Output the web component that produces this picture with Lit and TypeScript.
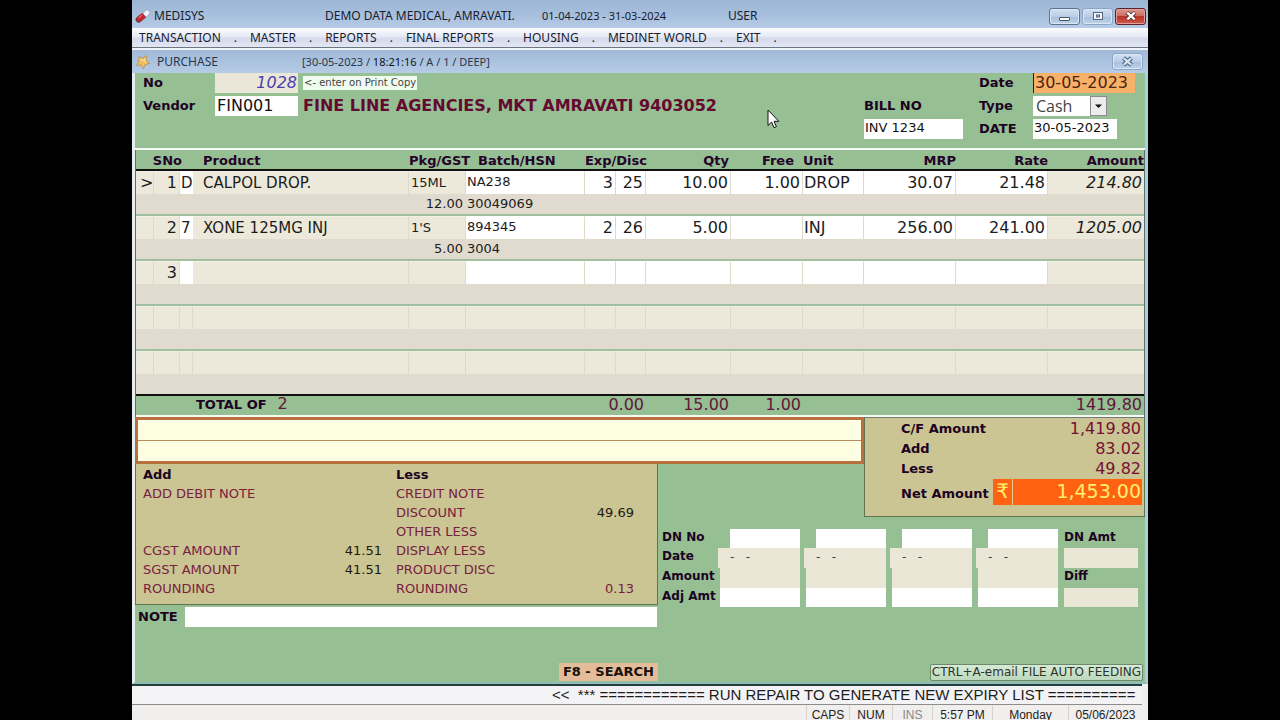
import { LitElement, html, css, nothing } from "lit";
import { customElement, state } from "lit/decorators.js";

interface Line {
  mark?: string;
  sno?: string;
  code?: string;
  product?: string;
  pack?: string;
  gst?: string;
  batch?: string;
  hsn?: string;
  month?: string;
  year?: string;
  qty?: string;
  free?: string;
  unit?: string;
  mrp?: string;
  rate?: string;
  amount?: string;
}

const MENU = ["TRANSACTION", "MASTER", "REPORTS", "FINAL REPORTS", "HOUSING", "MEDINET WORLD", "EXIT"];

const LINES: Line[] = [
  { mark: ">", sno: "1", code: "D", product: "CALPOL DROP.", pack: "15ML", gst: "12.00", batch: "NA238", hsn: "30049069", month: "3", year: "25", qty: "10.00", free: "1.00", unit: "DROP", mrp: "30.07", rate: "21.48", amount: "214.80" },
  { sno: "2", code: "7", product: "XONE 125MG INJ", pack: "1'S", gst: "5.00", batch: "894345", hsn: "3004", month: "2", year: "26", qty: "5.00", free: "", unit: "INJ", mrp: "256.00", rate: "241.00", amount: "1205.00" },
  { sno: "3" },
  {},
  {},
];

const ADJUST: [string, string, string, string][] = [
  ["ADD DEBIT NOTE", "", "CREDIT NOTE", ""],
  ["", "", "DISCOUNT", "49.69"],
  ["", "", "OTHER LESS", ""],
  ["CGST AMOUNT", "41.51", "DISPLAY LESS", ""],
  ["SGST AMOUNT", "41.51", "PRODUCT DISC", ""],
  ["ROUNDING", "", "ROUNDING", "0.13"],
];

const base = css`
  * { box-sizing: border-box; }
  button, input, select {
    font: inherit; color: inherit; margin: 0; padding: 0; border: 0; border-radius: 0;
    background: none; min-width: 0; outline: none;
  }
`;

@customElement("title-bars")
class TitleBars extends LitElement {
  static styles = [base, css`
    :host { display: block; font: 12px/16px "Noto Sans", "Open Sans", sans-serif; color: #17202e; }
    .title {
      display: grid; grid-template-columns: 20px 171px 217px 186px 1fr auto; align-items: center;
      height: 28px; padding: 4px 2px 0 2px;
      background: linear-gradient(#9bb5d3, #a9c1de 60%, #b6cbe6);
    }
    .logo { width: 16px; height: 16px; display: block; }
    .controls { display: flex; gap: 2px; }
    .ctl {
      width: 31px; height: 17px; border: 1px solid #5d738f; border-radius: 3px;
      background: linear-gradient(#d3e0f1, #b9cde6 50%, #a5bedb 51%, #bfd3ea);
      display: grid; place-items: center; box-shadow: inset 0 0 0 1px #dbe7f5;
    }
    .soft { border-color: #8ba6c6; }
    .close {
      border-color: #5b2229; box-shadow: inset 0 0 0 1px #e0a19a;
      background: linear-gradient(#dc9a90, #ce6c5f 48%, #b8362a 50%, #cf5a4a);
    }
    .menu {
      display: flex; gap: 13px; align-items: center; height: 19px; padding-left: 7px;
      background: linear-gradient(#fbfcfe, #e6e9f5 45%, #d5daec 55%, #e3e6f3);
    }
    .child {
      display: grid; grid-template-columns: 22px 145px 1fr auto; align-items: center;
      height: 26px; padding: 2px 5px 0 3px; color: #27384e;
      border-top: 1px solid #6d7681; box-shadow: inset 0 2px #eef4fa;
      background: linear-gradient(#9fb8d6, #b5cbe6);
    }
    .stamp { font-size: 11px; }
    .time { color: #0d141f; }
  `];

  render() {
    return html`
      <header class="title">
        <svg class="logo" viewBox="0 0 16 16">
          <path d="M8 6 11.2 2.8a2.6 2.6 0 0 1 3.8 3.7L11 10Z" fill="#eef3f9" stroke="#8094ac" stroke-width=".6" />
          <path d="M8.4 5.2 3 9.3a2.8 2.8 0 0 0 3.6 4.3l5.2-4.4Z" fill="#c1272d" stroke="#7c1c26" stroke-width=".6" />
          <path d="M4.5 10 8.3 7" stroke="#ef8c88" stroke-width="1" />
          <path d="M1.8 12.2q1.8 2.4 4.4 1.6" stroke="#3c4b6d" fill="none" />
        </svg>
        <span>MEDISYS</span>
        <span>DEMO DATA MEDICAL, AMRAVATI.</span>
        <span class="stamp">01-04-2023 - 31-03-2024</span>
        <span>USER</span>
        <div class="controls">
          <button class="ctl" aria-label="Minimize">
            <svg width="13" height="11" viewBox="0 0 13 11"><rect x="1.5" y="6.5" width="10" height="3" rx=".5" fill="#fff" stroke="#4a5566" /></svg>
          </button>
          <button class="ctl soft" aria-label="Restore">
            <svg width="12" height="10" viewBox="0 0 12 10"><rect x="1.5" y="1.5" width="9" height="7" fill="#f2f6fb" stroke="#55657c" /><rect x="4.5" y="4" width="3" height="2" fill="#a5bedb" stroke="#55657c" /></svg>
          </button>
          <button class="ctl close" aria-label="Close">
            <svg width="12" height="10" viewBox="0 0 12 10"><path d="M2 1.5 10 8.5M10 1.5 2 8.5" stroke="#562530" stroke-width="4" /><path d="M2.3 1.6 9.7 8.4M9.7 1.6 2.3 8.4" stroke="#fff" stroke-width="2.4" /></svg>
          </button>
        </div>
      </header>
      <nav class="menu">
        ${MENU.map((m) => html`<button>${m}</button><span>.</span>`)}
      </nav>
      <header class="child">
        <svg class="logo" viewBox="0 0 16 16">
          <path d="M4 2.5 7.5 4.3 11.5 1.5l-.3 4.8 3.3 3.2-4.3.8-1.7 4.4-2.6-3.8-4.4.5 2.3-4Z" fill="#f1bc5b" stroke="#b98a3b" stroke-width=".7" />
          <path d="M5 5.3 8 6.6l2-1.8-.1 3 1.6 1.7" fill="none" stroke="#fde6ae" />
        </svg>
        <span>PURCHASE</span>
        <span class="stamp">[30-05-2023 / <span class="time">18:21:16</span> / A / 1 / DEEP]</span>
        <button class="ctl soft" aria-label="Close purchase">
          <svg width="13" height="11" viewBox="0 0 13 11"><path d="M2.5 2 10.5 9M10.5 2 2.5 9" stroke="#56708f" stroke-width="4.4" /><path d="M2.8 2.2 10.2 8.8M10.2 2.2 2.8 8.8" stroke="#dfe9f5" stroke-width="2" /></svg>
        </button>
      </header>
    `;
  }
}

@customElement("bill-head")
class BillHead extends LitElement {
  static styles = [base, css`
    :host { display: block; font: 13px/20px Verdana, "DejaVu Sans", sans-serif; color: #111; }
    .form {
      display: grid; grid-template-columns: 67px 83px 1fr 99px 60px 102px; column-gap: 5px;
      grid-auto-rows: 20px; row-gap: 3px; padding: 0 10px 9px 8px; border-bottom: 2px solid #f4fbf3;
    }
    label { font-weight: bold; color: #1d0322; }
    .right { padding-left: 11px; }
    .col4 { grid-column: 4; }
    .col5 { grid-column: 5; }
    input { background: #fff; width: 100%; }
    .big { font-size: 16px; padding-left: 2px; }
    .no { background: #ebe7d8; color: #4a3fae; font-style: italic; text-align: right; padding-right: 1px; }
    .hint {
      justify-self: start; align-self: center; background: #effbee; color: #444;
      font-size: 10px; line-height: 14px; padding: 0 1px; white-space: nowrap;
    }
    .vendor { font-size: 16px; font-weight: bold; color: #640a30; white-space: nowrap; }
    .active { background: #f7b168; color: #4c2410; padding-left: 1px; border-left: 1px solid #2a1a10; }
    .bill { padding: 0 0 2px 1px; }
    .pick { display: grid; grid-template-columns: 1fr; width: 74px; background: #fff; }
    .pick select, .pick svg { grid-area: 1 / 1; }
    select { appearance: none; padding-left: 3px; font-size: 16px; color: #444; font-family: "Open Sans", sans-serif; }
    .arrow { justify-self: end; pointer-events: none; }
    .short { width: 84px; }
  `];

  render() {
    return html`
      <form class="form">
        <label for="no">No</label>
        <input id="no" class="big no" value="1028" readonly />
        <span class="hint">&lt;- enter on Print Copy</span>
        <label class="right col5" for="date">Date</label>
        <input id="date" class="big active" value="30-05-2023" />
        <label for="vendor">Vendor</label>
        <input id="vendor" class="big" value="FIN001" />
        <span class="vendor">FINE LINE AGENCIES, MKT AMRAVATI 9403052</span>
        <label for="bill">BILL NO</label>
        <label class="right" for="type">Type</label>
        <div class="pick">
          <select id="type"><option>Cash</option><option>Credit</option></select>
          <svg class="arrow" width="17" height="20" viewBox="0 0 17 20"><rect x=".5" y=".5" width="16" height="19" fill="#ececec" stroke="#8b8b8b" /><path d="M5 8.5h7L8.5 12Z" fill="#111" /></svg>
        </div>
        <input id="bill" class="bill col4" value="INV 1234" />
        <label class="right" for="billdate">DATE</label>
        <input id="billdate" class="bill short" value="30-05-2023" />
      </form>
    `;
  }
}

@customElement("item-table")
class ItemTable extends LitElement {
  @state() private lines = LINES;

  static styles = [base, css`
    :host { display: block; font: 13px/18px Verdana, "DejaVu Sans", sans-serif; color: #1c1c1c; }
    table {
      width: 100%; table-layout: fixed; border-collapse: separate; border-spacing: 0;
      border: solid #5c6f68; border-width: 0 1px;
    }
    .w-mark { width: 18px; } .w-sno { width: 26px; } .w-code { width: 13px; } .w-pack { width: 57px; }
    .w-batch { width: 119px; } .w-exp { width: 31px; } .w-disc { width: 30px; } .w-qty { width: 85px; }
    .w-free { width: 72px; } .w-unit { width: 61px; } .w-money { width: 92px; } .w-amount { width: 96px; }
    th, td { padding: 0; text-align: left; white-space: nowrap; }
    th { height: 21px; padding-top: 2px; line-height: 17px; color: #250329; border-bottom: 2px solid #111; }
    .r { text-align: right; }
    .h-sno { padding-right: 11px; }
    .name { padding-left: 10px; }
    .h-batch { padding-left: 12px; }
    .h-free { padding-right: 9px; }
    .h-qty { padding-right: 2px; }
    .main td { height: 23px; background: #ede9da; border-right: 1px solid #dedaca; font-size: 16px; line-height: 22px; border-top: 1px solid #f3f0e4; }
    .main td:last-child { border-right: 0; padding-right: 2px; font-style: italic; }
    .main .name { font-size: 15px; }
    .main .pack { font-size: 13px; padding-left: 2px; line-height: 20px; }
    .main .sno { padding-right: 2px; }
    .main .mark { padding-left: 4px; }
    .main .edit { background: #fff; border-top-color: #fff; }
    .edit input { display: block; width: 100%; height: 22px; padding: 0 2px 0 1px; }
    .main .edit.small { font-size: 13px; }
    .small input { padding-bottom: 2px; }
    .main .edit.code { font-size: 15px; border-right: 0; }
    .code input { padding-right: 0; }
    .r input { text-align: right; }
    .sub td { height: 22px; background: #e0dbce; border-bottom: 2px solid #a0bf9f; line-height: 20px; }
    .sub .gst { padding-right: 3px; }
    .sub .hsn { padding-left: 1px; }
    tbody tr:last-child td { border-bottom-color: #111; }
    tfoot td { height: 20px; line-height: 16px; font-size: 16px; color: #64143a; border-bottom: 2px solid #f4fbf3; padding: 0 2px 2px 0; }
    tfoot .of { padding-left: 60px; }
    tfoot b { font-size: 13px; color: #1d0322; padding-right: 11px; }
  `];

  private cell(value: string | undefined, open: boolean, label: string, cls: string) {
    return open
      ? html`<td class="edit ${cls}"><input aria-label=${label} .value=${value ?? ""} /></td>`
      : html`<td></td>`;
  }

  render() {
    return html`
      <table>
        <colgroup>
          <col class="w-mark" /><col class="w-sno" /><col class="w-code" /><col /><col class="w-pack" />
          <col class="w-batch" /><col class="w-exp" /><col class="w-disc" /><col class="w-qty" /><col class="w-free" />
          <col class="w-unit" /><col class="w-money" /><col class="w-money" /><col class="w-amount" />
        </colgroup>
        <thead>
          <tr>
            <th class="r h-sno" colspan="3">SNo</th>
            <th class="name">Product</th>
            <th>Pkg/GST</th>
            <th class="h-batch">Batch/HSN</th>
            <th colspan="2">Exp/Disc</th>
            <th class="r h-qty">Qty</th>
            <th class="r h-free">Free</th>
            <th>Unit</th>
            <th class="r">MRP</th>
            <th class="r">Rate</th>
            <th class="r">Amount</th>
          </tr>
        </thead>
        <tbody>
          ${this.lines.map((l) => {
            const open = l.sno !== undefined;
            return html`
              <tr class="main">
                <td class="mark">${l.mark ?? nothing}</td>
                <td class="sno r">${l.sno ?? nothing}</td>
                ${this.cell(l.code, open, "Code", "code")}
                <td class="name">${l.product ?? nothing}</td>
                <td class="pack">${l.pack ?? nothing}</td>
                ${this.cell(l.batch, open, "Batch", "small")}
                ${this.cell(l.month, open, "Expiry month", "r")}
                ${this.cell(l.year, open, "Expiry year", "r")}
                ${this.cell(l.qty, open, "Quantity", "r")}
                ${this.cell(l.free, open, "Free", "r")}
                ${this.cell(l.unit, open, "Unit", "")}
                ${this.cell(l.mrp, open, "MRP", "r")}
                ${this.cell(l.rate, open, "Rate", "r")}
                <td class="r">${l.amount ?? nothing}</td>
              </tr>
              <tr class="sub">
                <td colspan="4"></td>
                <td class="gst r">${l.gst ?? nothing}</td>
                <td class="hsn" colspan="9">${l.hsn ?? nothing}</td>
              </tr>`;
          })}
        </tbody>
        <tfoot>
          <tr>
            <td class="of" colspan="5"><b>TOTAL OF</b>2</td>
            <td></td>
            <td class="r" colspan="2">0.00</td>
            <td class="r">15.00</td>
            <td class="r">1.00</td>
            <td colspan="3"></td>
            <td class="r">1419.80</td>
          </tr>
        </tfoot>
      </table>
    `;
  }
}

@customElement("bill-foot")
class BillFoot extends LitElement {
  static styles = [base, css`
    :host { display: flex; flex-direction: column; flex: 1; font: 13px/20px Verdana, "DejaVu Sans", sans-serif; color: #1a1206; }
    .grid { display: grid; grid-template-columns: 523px 1fr 281px; grid-template-rows: 47px 53px auto auto; }
    .remarks {
      grid-area: 1 / 1 / 2 / 3; border: 3px solid #b9703f; display: grid; grid-template-rows: 1fr 1fr; gap: 1px;
      background: #b98a5c;
    }
    .remarks input { background: #fefee2; width: 100%; }
    .panel { background: #cbc493; border: 1px solid #5f7552; }
    .sum {
      grid-area: 1 / 3 / 3 / 4; display: grid; grid-template-columns: 92px 20px 1fr; grid-template-rows: 20px 20px 20px 26px;
      padding: 1px 2px 0 36px; align-content: start; border-top-color: #777;
    }
    .sum b, .label { color: #1d0322; font-weight: bold; }
    .sum output { grid-column: 2 / 4; text-align: right; font-size: 16px; color: #741133; padding-right: 1px; }
    .sum .netlabel { padding-top: 5px; }
    .sum .rupee, .sum .net { background: #ff6212; color: #fff169; font-size: 19px; line-height: 24px; }
    .sum .rupee { border-right: 1px solid #e6c890; text-align: center; font-size: 20px; }
    .sum .net { grid-column: 3; }
    .adjust {
      grid-area: 2 / 1 / 4 / 2; display: grid; grid-template-columns: 153px 86px 1fr 108px; padding: 1px 23px 6px 7px;
      line-height: 19px; color: #79203f; border-top: 0; grid-auto-rows: 19px; align-self: start;
    }
    .adjust .less { padding-left: 14px; }
    .adjust output { text-align: right; color: #1d1a10; }
    .adjust .red { color: #79203f; }
    .dn {
      grid-area: 3 / 2 / 4 / 4; display: grid; column-gap: 6px; margin-top: 12px; padding-left: 4px;
      grid-template-columns: 52px repeat(4, 80px) 74px; grid-template-rows: 19px 20px 20px 19px; align-content: start;
      justify-content: start;
    }
    .dn .label { font-size: 12px; line-height: 16px; white-space: nowrap; }
    .dn input { background: #fff; width: 100%; font-size: 12px; }
    .dn .no { width: 70px; justify-self: end; }
    .dn .date { width: 82px; justify-self: end; background: #eae7d7; padding: 0 0 3px 12px; color: #3b3a6b; white-space: pre; }
    .dn .shade { background: #eae7d7; }
    .note { grid-area: 4 / 1 / 5 / 2; display: grid; grid-template-columns: 47px 1fr; padding: 0 1px 0 3px; }
    .note input { height: 20px; background: #fff; width: 100%; }
    .actions {
      margin-top: auto; display: grid; grid-template-columns: 523px 1fr; align-items: end; padding: 0 2px 1px 0;
    }
    .search { justify-self: end; background: #e3bd99; font-weight: bold; color: #1b120c; padding: 0 4px; line-height: 18px; }
    .feed {
      justify-self: end; border: 1px solid #6b8a6c; border-radius: 2px; color: #2c352d; padding: 0 1px; font-size: 12px;
      line-height: 15px; background: linear-gradient(#d8ead7, #bcd8bb);
    }
  `];

  render() {
    const slots = [1, 2, 3, 4];
    return html`
      <div class="grid">
        <div class="remarks">
          <input aria-label="Message line 1" /><input aria-label="Message line 2" />
        </div>
        <section class="panel sum">
          <b>C/F Amount</b><output>1,419.80</output>
          <b>Add</b><output>83.02</output>
          <b>Less</b><output>49.82</output>
          <b class="netlabel">Net Amount</b><span class="rupee">₹</span><output class="net">1,453.00</output>
        </section>
        <section class="panel adjust">
          <span class="label">Add</span><span></span><span class="label less">Less</span><span></span>
          ${ADJUST.map(([a, av, l, lv]) => html`
            <span>${a}</span><output>${av}</output>
            <span class="less">${l}</span><output class=${lv === "0.13" ? "red" : ""}>${lv}</output>`)}
        </section>
        <section class="dn">
          <span class="label">DN No</span>
          ${slots.map((i) => html`<input class="no" aria-label="DN number ${i}" />`)}
          <label class="label" for="dnamt">DN Amt</label>
          <span class="label">Date</span>
          ${slots.map((i) => html`<input class="date" aria-label="DN date ${i}" value="-   -" />`)}
          <input id="dnamt" class="shade" />
          <span class="label">Amount</span>
          ${slots.map((i) => html`<input class="shade" aria-label="DN amount ${i}" />`)}
          <label class="label" for="diff">Diff</label>
          <span class="label">Adj Amt</span>
          ${slots.map((i) => html`<input aria-label="Adjusted amount ${i}" />`)}
          <input id="diff" class="shade" />
        </section>
        <div class="note">
          <label class="label" for="note">NOTE</label>
          <input id="note" />
        </div>
      </div>
      <div class="actions">
        <button class="search">F8 - SEARCH</button>
        <button class="feed">CTRL+A-email FILE AUTO FEEDING</button>
      </div>
    `;
  }
}

@customElement("app-root")
class AppRoot extends LitElement {
  static styles = [base, css`
    :host { display: block; background: #000; }
    .stage { height: 100vh; min-height: 720px; overflow: hidden; padding: 0 132px; position: relative; }
    .frame { display: flex; flex-direction: column; height: 100%; background: #f0efee; }
    .work {
      flex: 1; display: flex; flex-direction: column; background: #96bf94; min-height: 0;
      border: solid #a9d0dc; border-width: 0 3px 2px; border-left-color: #e8eef0; border-bottom-color: #8fbcb8;
    }
    .ticker {
      font: 15px/17px "Liberation Sans", Arial, sans-serif; color: #1d1d1d; white-space: pre; overflow: hidden;
      border-top: 2px solid #22413c; border-bottom: 1px solid #8c8c8c; background: #f3f3f5; height: 21px;
      margin-right: 6px; padding-left: 420px;
    }
    .status {
      font: 12px/20px "Liberation Sans", Arial, sans-serif; color: #222; display: flex; justify-content: flex-end;
      height: 15px; padding-right: 6px; text-align: center;
    }
    .status span { border-left: 1px solid #d5d3d2; }
    .caps { width: 43px; } .num { width: 43px; } .ins { width: 40px; color: #888; }
    .clock { width: 60px; } .day { width: 76px; } .today { width: 74px; }
    .pointer { position: absolute; left: 767px; top: 109px; }
  `];

  render() {
    return html`
      <div class="stage">
        <div class="frame">
          <title-bars></title-bars>
          <main class="work">
            <bill-head></bill-head>
            <item-table></item-table>
            <bill-foot></bill-foot>
          </main>
          <div class="ticker">&lt;&lt;  *** ============ RUN REPAIR TO GENERATE NEW EXPIRY LIST ==========</div>
          <footer class="status">
            <span class="caps">CAPS</span><span class="num">NUM</span><span class="ins">INS</span>
            <span class="clock">5:57 PM</span><span class="day">Monday</span><span class="today">05/06/2023</span>
          </footer>
        </div>
        <svg class="pointer" width="13" height="20" viewBox="0 0 13 20">
          <path d="M1 1v15.5l3.6-3.4 2.4 5.6 2.4-1-2.4-5.4h4.8Z" fill="#fff" stroke="#111" />
        </svg>
      </div>
    `;
  }
}
